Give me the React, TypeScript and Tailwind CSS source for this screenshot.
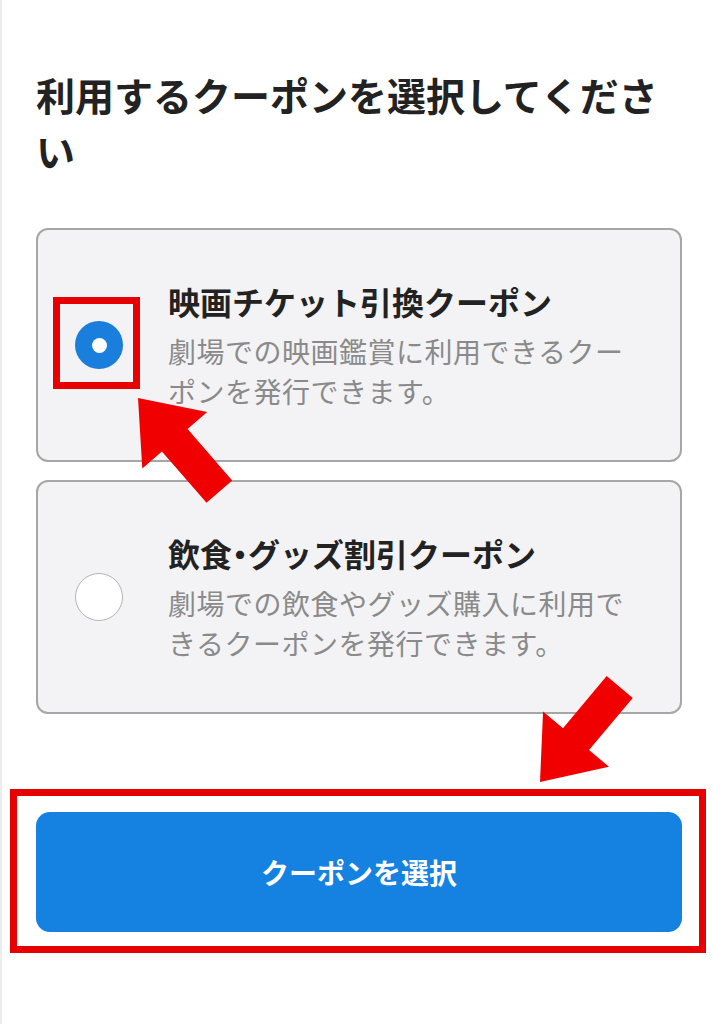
import React, { useState } from "react";

const coupons = [
  {
    id: "movie",
    title: "映画チケット引換クーポン",
    desc: "劇場での映画鑑賞に利用できるクーポンを発行できます。",
  },
  {
    id: "food",
    title: "飲食・グッズ割引クーポン",
    desc: "劇場での飲食やグッズ購入に利用できるクーポンを発行できます。",
  },
];

function Radio({ checked }: { checked: boolean }) {
  if (checked) {
    return (
      <span className="flex h-[48px] w-[48px] shrink-0 items-center justify-center rounded-full bg-[#1a7fdc]">
        <span className="h-[15px] w-[15px] rounded-full bg-white" />
      </span>
    );
  }
  return <span className="h-[48px] w-[48px] shrink-0 rounded-full border-[1.5px] border-[#b4b4b4] bg-white" />;
}

// the middle dot is set proportional so it doesn't take a full em
function Title({ text }: { text: string }) {
  const parts = text.split("・");
  return (
    <p className="text-[32px] font-bold leading-[44px] text-[#222]">
      {parts.map((p, i) => (
        <React.Fragment key={i}>
          {i > 0 && <span className="[font-feature-settings:'palt']">・</span>}
          {p}
        </React.Fragment>
      ))}
    </p>
  );
}

// up-pointing block arrow, tip at origin
const ARROW = "0,0 43,56 17,56 17,124 -17,124 -17,56 -43,56";

export default function App() {
  const [selected, setSelected] = useState("movie");

  return (
    <div
      className="relative h-[1024px] w-[713px] overflow-hidden bg-white"
      style={{ fontFamily: '"Noto Sans CJK JP", "Noto Sans", sans-serif' }}
    >
      <div className="absolute inset-y-0 left-0 w-[2px] bg-[#ececec]" />

      <div className="pl-[36px] pr-[31px] pt-[66px]">
        <h1 className="text-[39px] font-bold leading-[56px] text-[#222]">利用するクーポンを選択してください</h1>

        <div className="mt-[50px] flex flex-col gap-[18px]">
          {coupons.map((c) => (
            <button
              key={c.id}
              onClick={() => setSelected(c.id)}
              className="flex h-[234px] items-center rounded-[12px] border-2 border-[#a6a6a6] bg-[#f3f3f5] pl-[37px] text-left"
            >
              <Radio checked={selected === c.id} />
              <div className="ml-[45px] w-[466px]">
                <Title text={c.title} />
                <p className="mt-[8px] text-[28px] leading-[40px] tracking-[0.5px] text-[#8a8a8a]">{c.desc}</p>
              </div>
            </button>
          ))}
        </div>

        <button className="mt-[98px] flex h-[120px] w-full items-center justify-center rounded-[14px] bg-[#1581e0] text-[28px] font-bold text-white">
          クーポンを選択
        </button>
      </div>

      {/* callouts */}
      <div className="pointer-events-none absolute left-[53px] top-[297px] h-[92px] w-[87px] border-[7px] border-[#e60000]" />
      <div className="pointer-events-none absolute left-[10px] top-[789px] h-[164px] w-[696px] border-[7px] border-[#e60000]" />
      <svg className="pointer-events-none absolute inset-0" width="713" height="1024" viewBox="0 0 713 1024">
        <polygon points={ARROW} fill="#f00000" transform="translate(138 398) rotate(-41)" />
        <polygon points={ARROW} fill="#f00000" transform="translate(540 782) rotate(-140)" />
      </svg>
    </div>
  );
}
